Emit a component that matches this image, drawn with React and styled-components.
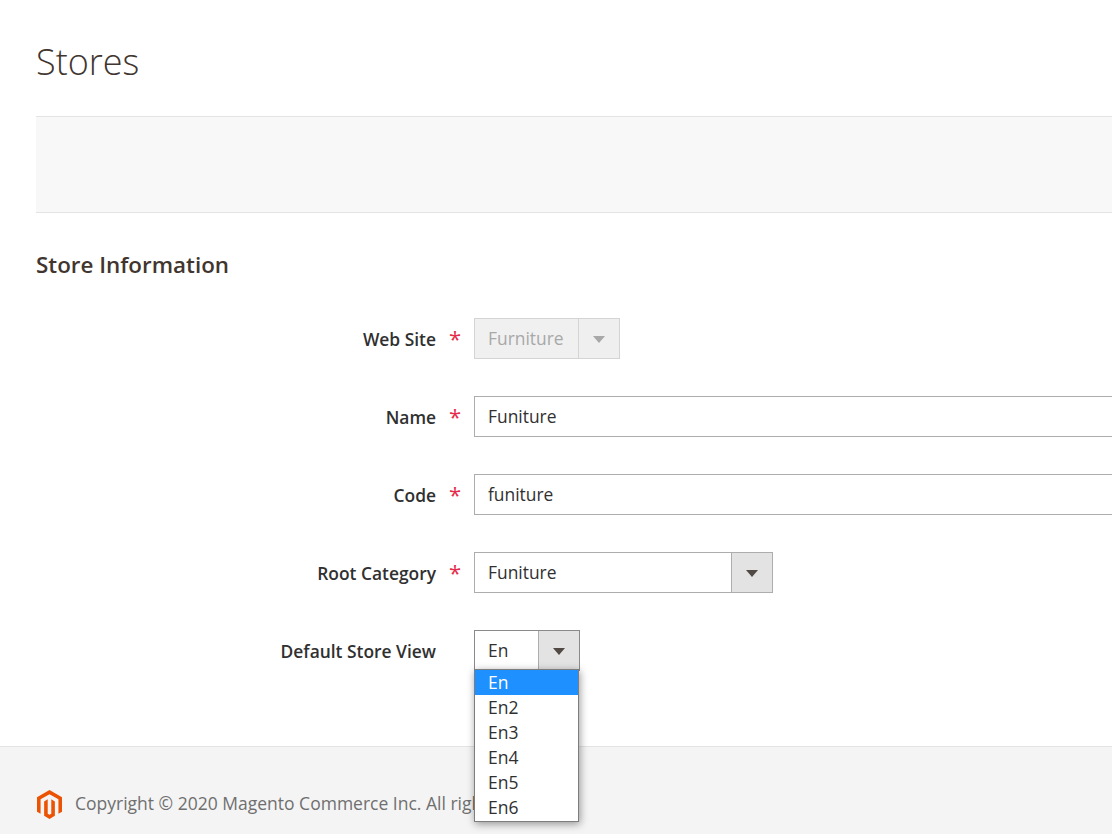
import React from 'react'
import styled, {createGlobalStyle} from 'styled-components'

const options = ['En', 'En2', 'En3', 'En4', 'En5', 'En6']

function Arrow({disabled}) {
    return (
        <ArrowBox $disabled={disabled}>
            <ArrowShape $disabled={disabled} />
        </ArrowBox>
    )
}

function Row({label, required, children}) {
    return (
        <FieldRow>
            <Label>{label}</Label>
            <Star>{required ? '*' : ''}</Star>
            {children}
        </FieldRow>
    )
}

function App() {
    return (
        <Page>
            <GlobalStyle />
            <Title>Stores</Title>
            <ActionBar />
            <Main>
                <SectionTitle>Store Information</SectionTitle>
                <Row label="Web Site" required>
                    <Select $width={146} $disabled>
                        <SelectValue>Furniture</SelectValue>
                        <Arrow disabled />
                    </Select>
                </Row>
                <Row label="Name" required>
                    <Input>Funiture</Input>
                </Row>
                <Row label="Code" required>
                    <Input>funiture</Input>
                </Row>
                <Row label="Root Category" required>
                    <Select $width={299}>
                        <SelectValue>Funiture</SelectValue>
                        <Arrow />
                    </Select>
                </Row>
                <Row label="Default Store View">
                    <Select $width={106} $open>
                        <SelectValue>En</SelectValue>
                        <Arrow />
                        <Menu>
                            {options.map((o, i) => (
                                <MenuItem key={o} $active={i === 0}>{o}</MenuItem>
                            ))}
                        </Menu>
                    </Select>
                </Row>
            </Main>
            <Footer>
                <Logo viewBox="0 0 20.78 24" aria-hidden="true">
                    <path
                        transform="translate(-1.609 0)"
                        fill="#eb5202"
                        d="M12 24l-4.455-2.572v-12l2.97-1.715v12.001l1.485.902 1.485-.902V7.713l2.971 1.715v12L12 24zM22.391 6v12l-2.969 1.714V7.713L12 3.43 4.574 7.713v12.001L1.609 18V6L12 0l10.391 6z"
                    />
                </Logo>
                <Copyright>Copyright © 2020 Magento Commerce Inc. All rights reserved.</Copyright>
            </Footer>
        </Page>
    )
}

export default App

const GlobalStyle = createGlobalStyle`
html, body {
    margin:0;
    padding:0;
    height:100%;
    overflow:hidden;
    background:#fff;
}
`

const Page = styled.div`
width:1112px;
height:834px;
overflow:hidden;
display:flex;
flex-direction:column;
font-family:"Open Sans", "Liberation Sans", sans-serif;
color:#303030;
`

const Title = styled.h1`
margin:0;
padding:0 0 0 36px;
height:116px;
line-height:124px;
font-size:36px;
font-weight:300;
color:#41362f;
`

const ActionBar = styled.div`
margin-left:36px;
height:95px;
background:#f8f8f8;
border-top:1px solid #e3e3e3;
border-bottom:1px solid #e3e3e3;
`

const Main = styled.div`
flex:1;
padding:0 0 0 36px;
display:flex;
flex-direction:column;
`

const SectionTitle = styled.h2`
margin:35px 0 36px;
font-size:22.4px;
line-height:34px;
font-weight:600;
color:#41362f;
`

const FieldRow = styled.div`
display:flex;
align-items:center;
height:41px;
margin-bottom:37px;
`

const Label = styled.div`
width:400px;
flex-shrink:0;
text-align:right;
font-size:17.4px;
font-weight:600;
color:#303030;
`

const Star = styled.span`
width:38px;
flex-shrink:0;
padding-left:13px;
box-sizing:border-box;
font-size:22px;
line-height:41px;
color:#e62a4a;
`

const Input = styled.div`
width:800px;
flex-shrink:0;
height:41px;
box-sizing:border-box;
padding:0 0 2px 13px;
display:flex;
align-items:center;
border:1px solid #adadad;
font-size:17.4px;
color:#303030;
`

const Select = styled.div`
position:relative;
width:${props => props.$width}px;
flex-shrink:0;
height:41px;
box-sizing:border-box;
display:flex;
align-items:center;
border:1px solid ${props => props.$disabled ? '#d4d4d4' : props.$open ? '#8a8a8a' : '#adadad'};
background:${props => props.$disabled ? '#f0f0f0' : '#fff'};
color:${props => props.$disabled ? '#a8a8a8' : '#303030'};
font-size:17.4px;
`

const SelectValue = styled.span`
flex:1;
padding:0 0 2px 13px;
`

const ArrowBox = styled.span`
width:41px;
height:100%;
box-sizing:border-box;
display:flex;
align-items:center;
justify-content:center;
background:${props => props.$disabled ? '#efefef' : '#e3e3e3'};
border-left:1px solid ${props => props.$disabled ? '#d4d4d4' : '#adadad'};
`

const ArrowShape = styled.span`
width:0;
height:0;
border-left:6px solid transparent;
border-right:6px solid transparent;
border-top:7px solid ${props => props.$disabled ? '#a8a8a8' : '#514943'};
margin-top:2px;
`

const Menu = styled.div`
position:absolute;
left:-1px;
top:38px;
width:105px;
box-sizing:border-box;
background:#fff;
border:1px solid #7d7d7d;
box-shadow:1px 2px 8px rgba(0,0,0,.4);
padding-bottom:1px;
z-index:10;
`

const MenuItem = styled.div`
height:25px;
line-height:25px;
padding-left:13px;
font-size:17.5px;
background:${props => props.$active ? '#1e90ff' : 'transparent'};
color:${props => props.$active ? '#fff' : '#303030'};
`

const Footer = styled.footer`
height:88px;
padding:43px 0 0 37px;
box-sizing:border-box;
display:flex;
align-items:flex-start;
background:#f4f4f4;
border-top:1px solid #e3e3e3;
`

const Logo = styled.svg`
width:25px;
height:29px;
flex-shrink:0;
`

const Copyright = styled.span`
margin-left:13px;
font-size:17.5px;
line-height:26px;
color:#6f6f6f;
white-space:nowrap;
`
